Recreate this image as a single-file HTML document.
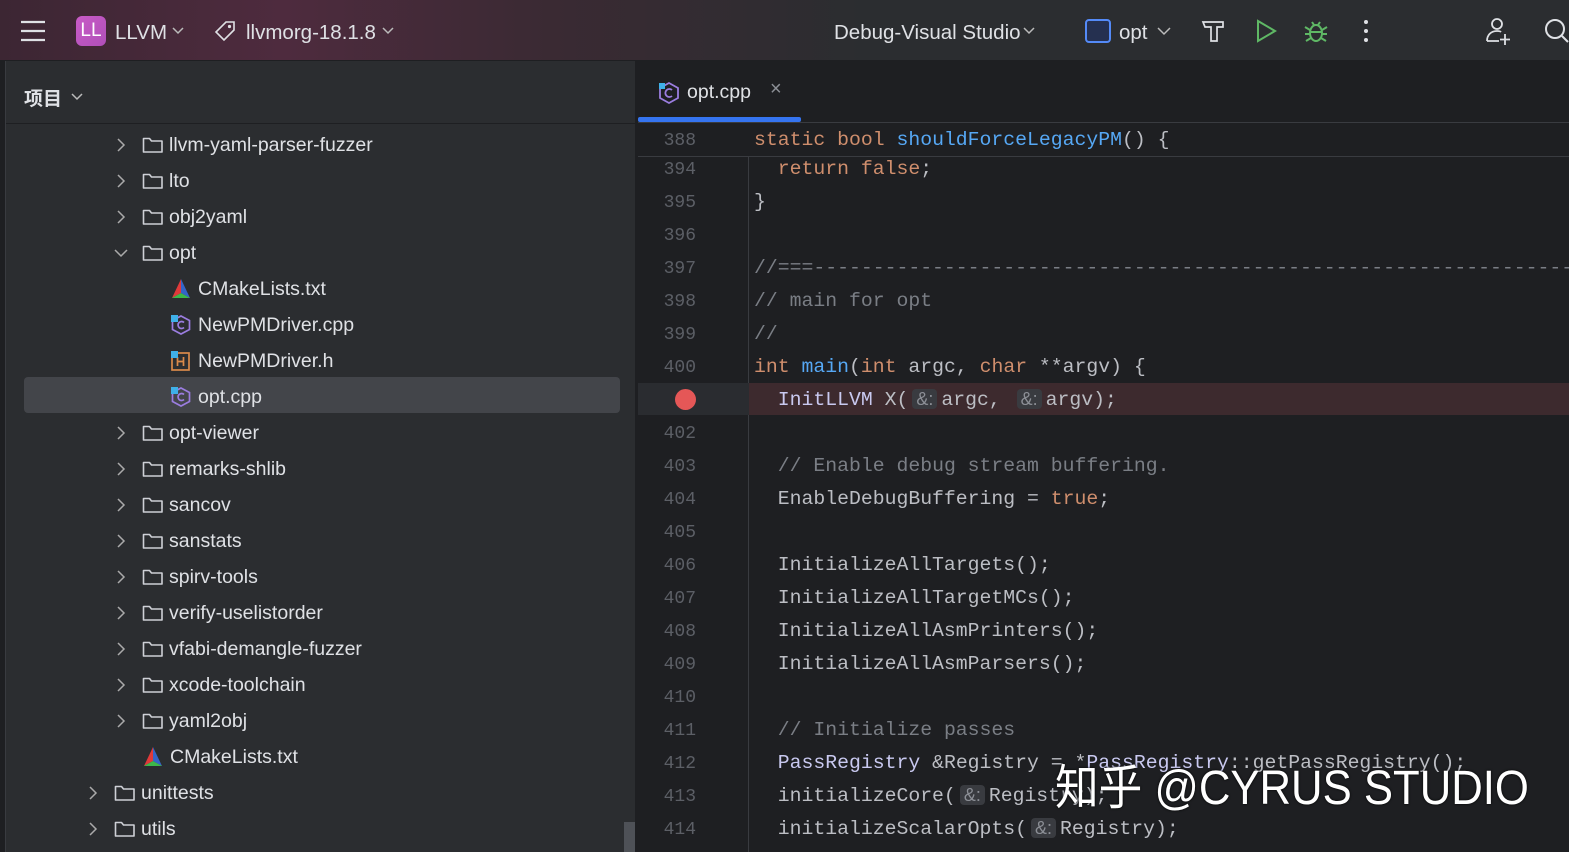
<!DOCTYPE html>
<html><head><meta charset="utf-8">
<style>
*{margin:0;padding:0;box-sizing:border-box}
body{width:1569px;height:852px;overflow:hidden;background:#1e1f22;font-family:"Liberation Sans","Noto Sans CJK SC",sans-serif;position:relative;color:#dfe1e5}
#top{position:absolute;left:0;top:0;width:1569px;height:60px;background:linear-gradient(90deg,#3c2633 0%,#4e2b3e 18%,#3a2a33 35%,#2b2d30 55%,#2b2d30 100%);}
.t{position:absolute;font-size:20.5px;color:#dfe1e5;top:21px}
#side{position:absolute;left:5px;top:61px;width:630px;height:791px;background:#2b2d30;border-left:1px solid #393b40}
#sidehdr{position:absolute;left:0;top:0;width:630px;height:63px;border-bottom:1px solid #1e1f22}
.row{position:absolute;height:36px;font-size:19.5px;color:#dfe1e5;line-height:36px;white-space:nowrap}
#ed{position:absolute;left:638px;top:61px;width:931px;height:791px;background:#1e1f22;overflow:hidden}
.ln{position:absolute;left:0;width:58px;text-align:right;font-family:"Liberation Mono",monospace;font-size:18px;color:#5c5f66}
.cl{position:absolute;left:116px;font-family:"Liberation Mono",monospace;font-size:19.8px;color:#bcbec4;white-space:pre}
.k{color:#cf8e6d}.f{color:#56a8f5}.c{color:#7a7e85}.p{color:#c9c9f0}
.h{background:#393b40;color:#8c8f96;border-radius:4px;padding:0 4px;margin:0 4px;font-family:"Liberation Sans",sans-serif;font-size:18px}
</style></head><body>
<div id="top">
 <svg style="position:absolute;left:20px;top:19px" width="26" height="24"><g stroke="#dfe1e5" stroke-width="2.2"><line x1="1" y1="3" x2="25" y2="3"/><line x1="1" y1="12" x2="25" y2="12"/><line x1="1" y1="21" x2="25" y2="21"/></g></svg>
 <div style="position:absolute;left:76px;top:16px;width:30px;height:30px;border-radius:6px;background:linear-gradient(135deg,#c85bc6,#b04fb9);font-size:19px;color:#fff;text-align:center;line-height:30px">LL</div>
 <div class="t" style="left:115px">LLVM</div>
 <svg style="position:absolute;left:172px;top:27px" width="12" height="8"><path d="M1 1l5 5 5-5" stroke="#bbb" fill="none" stroke-width="1.5"/></svg>
 <svg style="position:absolute;left:214px;top:20px" width="22" height="22"><path d="M12 2h8v8L10 20 2 12z" stroke="#dfe1e5" fill="none" stroke-width="1.6"/><circle cx="15.5" cy="6.5" r="1.6" fill="#dfe1e5"/></svg>
 <div class="t" style="left:246px">llvmorg-18.1.8</div>
 <svg style="position:absolute;left:382px;top:27px" width="12" height="8"><path d="M1 1l5 5 5-5" stroke="#bbb" fill="none" stroke-width="1.5"/></svg>
 <div class="t" style="left:834px">Debug-Visual Studio</div>
 <svg style="position:absolute;left:1023px;top:27px" width="12" height="8"><path d="M1 1l5 5 5-5" stroke="#bbb" fill="none" stroke-width="1.5"/></svg>
 <div style="position:absolute;left:1085px;top:19px;width:26px;height:24px;border:2px solid #548af7;border-radius:4px;background:#253050"></div>
 <div class="t" style="left:1119px">opt</div>
 <svg style="position:absolute;left:1157px;top:27px" width="14" height="9"><path d="M1 1l6 6 6-6" stroke="#bbb" fill="none" stroke-width="1.5"/></svg>
 <svg style="position:absolute;left:1201px;top:19px" width="24" height="24"><path d="M2 3h20v5h-6v14h-6V8H4z" stroke="#dfe1e5" fill="none" stroke-width="1.7"/></svg>
 <svg style="position:absolute;left:1255px;top:19px" width="22" height="24"><path d="M3 2l17 10-17 10z" stroke="#5fb865" fill="none" stroke-width="2"/></svg>
 <svg style="position:absolute;left:1303px;top:18px" width="26" height="26"><g stroke="#5fb865" fill="none" stroke-width="2"><ellipse cx="13" cy="15" rx="6" ry="8"/><line x1="7" y1="14" x2="19" y2="14"/><path d="M2 9l5 3M24 9l-5 3M2 16h5M24 16h-5M3 23l5-3M23 23l-5-3M9 4l2 3M17 4l-2 3"/></g></svg>
 <svg style="position:absolute;left:1362px;top:19px" width="8" height="24"><g fill="#dfe1e5"><circle cx="4" cy="3" r="2"/><circle cx="4" cy="12" r="2"/><circle cx="4" cy="21" r="2"/></g></svg>
 <svg style="position:absolute;left:1485px;top:17px" width="28" height="30"><g stroke="#dfe1e5" fill="none" stroke-width="1.8"><circle cx="12" cy="7" r="5"/><path d="M2 24c0-6 4-10 10-10 2 0 3 0 4 1M2 24h12M20 17v11M15 22.5h10"/></g></svg>
 <svg style="position:absolute;left:1543px;top:17px" width="26" height="28"><g stroke="#dfe1e5" fill="none" stroke-width="2"><circle cx="12" cy="12" r="9"/><line x1="19" y1="19" x2="25" y2="25"/></g></svg>
</div>

<div id="side">
 <div id="sidehdr"><div style="position:absolute;left:18px;top:23px;font-size:19px;font-weight:bold;color:#dfe1e5">项目</div>
 <svg style="position:absolute;left:65px;top:32px" width="12" height="8"><path d="M1 1l5 5 5-5" stroke="#bbb" fill="none" stroke-width="1.5"/></svg></div>
 <div style="position:absolute;left:18px;top:316px;width:596px;height:36px;background:#43454a;border-radius:4px"></div>
 <div style="position:absolute;left:618px;top:761px;width:11px;height:30px;background:#4e5157"></div>
</div>
<div id="tree"></div>

<div id="ed">
 <svg style="position:absolute;left:19px;top:20px" width="24" height="24"><path d="M12 2l9 5v10l-9 5-9-5V7z" stroke="#9b7de0" fill="none" stroke-width="1.8"/><path d="M15 9a4 4 0 1 0 0 6" stroke="#9b7de0" fill="none" stroke-width="1.8"/><rect x="2" y="2" width="6" height="6" fill="#3fb0e8"/></svg>
 <div style="position:absolute;left:49px;top:20px;font-size:19.5px;color:#dfe1e5">opt.cpp</div>
 <div style="position:absolute;left:132px;top:17px;font-size:20px;color:#8c8f96">×</div>
 <div style="position:absolute;left:0;top:56px;width:163px;height:5px;background:#3574f0;border-radius:2px"></div>
 <div style="position:absolute;left:0;top:61px;width:931px;height:1px;background:#393b40"></div>
 <div style="position:absolute;left:0;top:95px;width:931px;height:1px;background:#393b40"></div>
 <div style="position:absolute;left:110px;top:96px;width:1px;height:700px;background:#393b40"></div>
 <div style="position:absolute;left:0;top:322px;width:111px;height:32px;background:#2a2c30"></div>
 <div style="position:absolute;left:111px;top:322px;width:820px;height:32px;background:#3d2a2e"></div>
 <div style="position:absolute;left:37px;top:328px;width:21px;height:21px;border-radius:50%;background:#e55757"></div>
 <div id="code"></div>
</div>
<div style="position:absolute;left:1055px;top:748px;font-size:48px;color:#fff;font-family:'Liberation Sans','Noto Sans CJK SC',sans-serif;text-shadow:0 0 3px #000;white-space:nowrap;transform:scaleX(0.91);transform-origin:0 0">知乎 @CYRUS STUDIO</div>

<script>
var f='<svg width="22" height="18" style="position:absolute;left:SX;top:9px"><path d="M1.5 2.5h6l2 2.5h10.5v11h-18.5z" stroke="#ced0d6" fill="none" stroke-width="1.6" stroke-linejoin="round"/></svg>';
var cm='<svg width="22" height="22" style="position:absolute;left:SX;top:7px"><path d="M11 1L2 20l9-5z" fill="#e03a3a"/><path d="M11 1l9 19-9-5z" fill="#3465c8"/><path d="M2 20h18l-9-5z" fill="#3db84a"/></svg>';
var cp='<svg width="22" height="22" style="position:absolute;left:SX;top:7px"><path d="M11 2l8.5 4.5v9L11 20l-8.5-4.5v-9z" stroke="#9b7de0" fill="none" stroke-width="1.7"/><path d="M14 8.5a3.5 3.5 0 1 0 0 5" stroke="#9b7de0" fill="none" stroke-width="1.7"/><rect x="1" y="1" width="7" height="7" fill="#3fb0e8"/></svg>';
var hh='<svg width="22" height="22" style="position:absolute;left:SX;top:7px"><rect x="2" y="3" width="17" height="17" stroke="#d9894a" fill="none" stroke-width="1.7"/><path d="M7.5 7v9M13.5 7v9M7.5 11.5h6" stroke="#d9894a" stroke-width="1.7"/><rect x="1" y="1" width="7" height="7" fill="#3fb0e8"/></svg>';
var rows=[[120,1,'llvm-yaml-parser-fuzzer'],[120,1,'lto'],[120,1,'obj2yaml'],[120,2,'opt'],[170,'cm','CMakeLists.txt'],[170,'cp','NewPMDriver.cpp'],[170,'hh','NewPMDriver.h'],[170,'cp','opt.cpp'],[120,1,'opt-viewer'],[120,1,'remarks-shlib'],[120,1,'sancov'],[120,1,'sanstats'],[120,1,'spirv-tools'],[120,1,'verify-uselistorder'],[120,1,'vfabi-demangle-fuzzer'],[120,1,'xcode-toolchain'],[120,1,'yaml2obj'],[142,'cm','CMakeLists.txt'],[92,1,'unittests'],[92,1,'utils']];
var h='';rows.forEach(function(r,i){var y=127+i*36,x=r[0],s='';
 if(r[1]===1||r[1]===2){s+=(r[1]===1?'<svg width="10" height="14" style="position:absolute;left:'+(x-4)+'px;top:11px"><path d="M2 1l6 6-6 6" stroke="#aaa" fill="none" stroke-width="1.5"/></svg>':'<svg width="14" height="10" style="position:absolute;left:'+(x-6)+'px;top:13px"><path d="M1 2l6 6 6-6" stroke="#aaa" fill="none" stroke-width="1.5"/></svg>');
  s+=f.replace('SX',(x+22)+'px');s+='<span style="position:absolute;left:'+(x+49)+'px">'+r[2]+'</span>';}
 else{var ic={cm:cm,cp:cp,hh:hh}[r[1]];s+=ic.replace('SX',(x)+'px');s+='<span style="position:absolute;left:'+(x+28)+'px">'+r[2]+'</span>';}
 h+='<div class="row" style="left:0;top:'+y+'px;width:630px">'+s+'</div>';});
document.getElementById('tree').innerHTML=h;
var K=function(t){return '<span class="k">'+t+'</span>'},F=function(t){return '<span class="f">'+t+'</span>'},C=function(t){return '<span class="c">'+t+'</span>'},P=function(t){return '<span class="p">'+t+'</span>'},H='<span class="h">&amp;:</span>';
var code=[['388',K('static bool ')+F('shouldForceLegacyPM')+'() {',0],['394','  '+K('return false')+';'],['395','}'],['396',''],['397',C('//===----------------------------------------------------------------------===//')],['398',C('// main for opt')],['399',C('//')],['400',K('int ')+F('main')+'('+K('int')+' argc, '+K('char')+' **argv) {'],['','  '+P('InitLLVM')+' X('+H+'argc, '+H+'argv);'],['402',''],['403','  '+C('// Enable debug stream buffering.')],['404','  EnableDebugBuffering = '+K('true')+';'],['405',''],['406','  InitializeAllTargets();'],['407','  InitializeAllTargetMCs();'],['408','  InitializeAllAsmPrinters();'],['409','  InitializeAllAsmParsers();'],['410',''],['411','  '+C('// Initialize passes')],['412','  '+P('PassRegistry')+' &amp;Registry = *'+P('PassRegistry')+'::getPassRegistry();'],['413','  initializeCore('+H+'Registry);'],['414','  initializeScalarOpts('+H+'Registry);']];
var c='';code.forEach(function(l,i){var cy=i==0?79:108+(i-1)*33;var top=cy-11;
 c+='<div class="ln" style="top:'+(top+2)+'px">'+l[0]+'</div><div class="cl" style="top:'+top+'px">'+l[1]+'</div>';});
document.getElementById('code').innerHTML=c;
</script>
</body></html>
